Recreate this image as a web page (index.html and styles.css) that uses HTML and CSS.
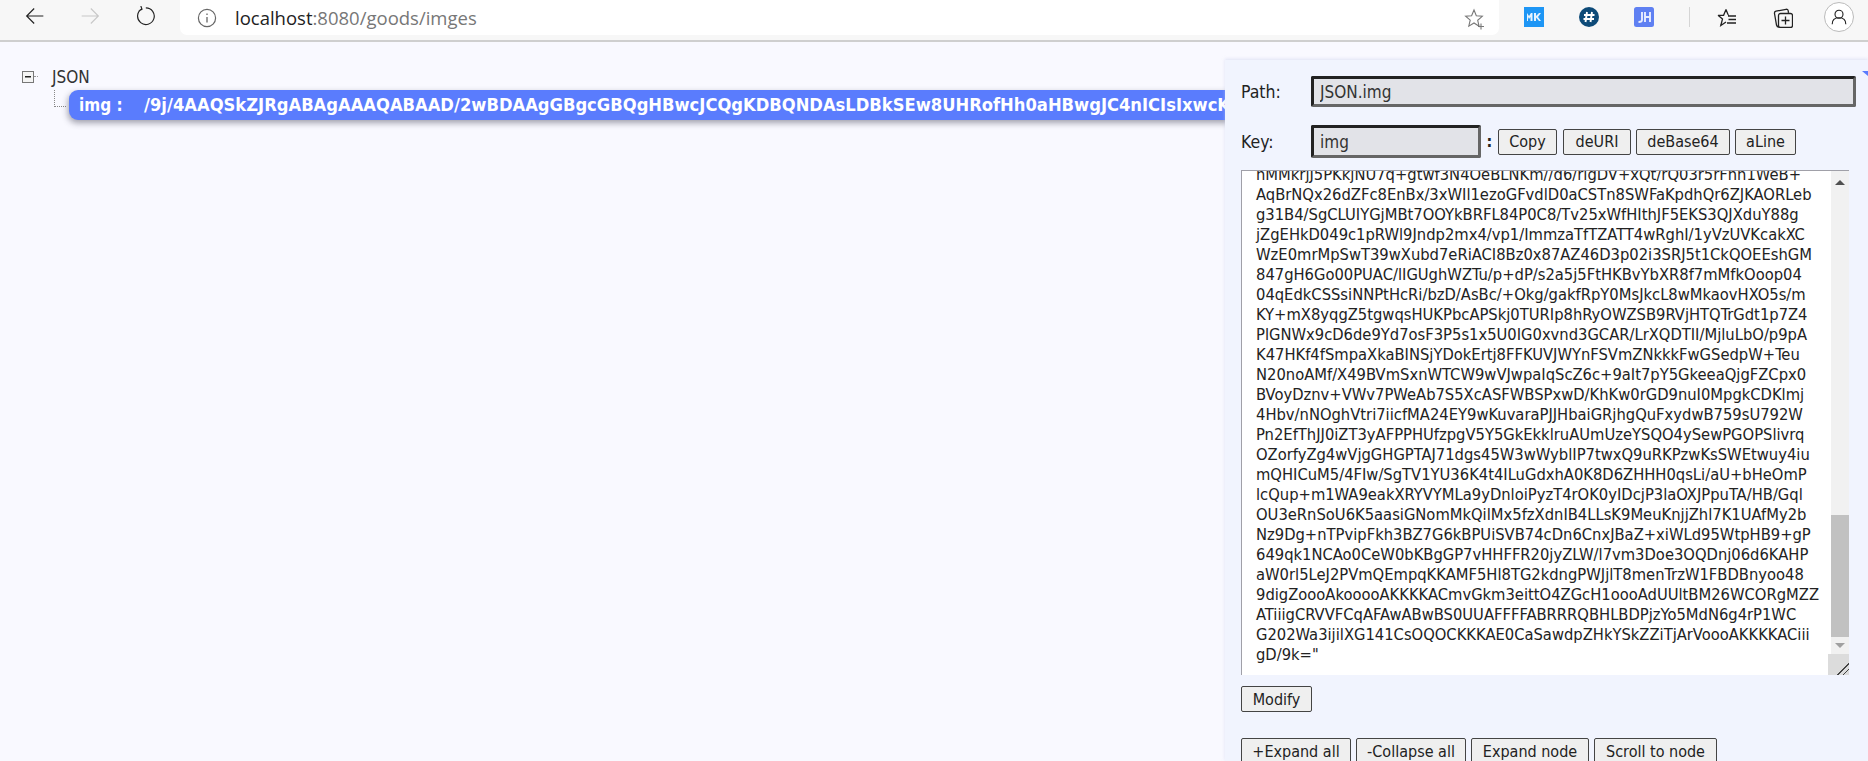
FILE: index.html
```html
<!DOCTYPE html>
<html lang="en">
<head>
<meta charset="utf-8">
<title>localhost:8080/goods/imges</title>
<link rel="stylesheet" href="styles.css">
</head>
<body>
<header class="toolbar">
  <nav class="nav">
    <svg class="nav-icon" viewBox="0 0 24 24"><path d="M22 12H2M11 3l-9 9 9 9" fill="none" stroke="#222" stroke-width="1.4"/></svg>
    <svg class="nav-icon" viewBox="0 0 24 24"><path d="M2 12h20M13 3l9 9-9 9" fill="none" stroke="#c8c8c8" stroke-width="1.4"/></svg>
    <svg class="nav-icon" viewBox="0 0 24 24"><path d="M8 3.6A10 10 0 1 0 13 2.2M7 0l1.4 3.8L4.6 6" fill="none" stroke="#222" stroke-width="1.4"/></svg>
  </nav>
  <div class="url">
    <svg class="info" viewBox="0 0 20 20"><circle cx="10" cy="10" r="8.6" fill="none" stroke="#666" stroke-width="1.2"/><path d="M10 9v5.5M10 5.5v1.6" stroke="#666" stroke-width="1.3"/></svg>
    <span class="host">localhost</span><span class="path">:8080/goods/imges</span>
    <svg class="addfav" viewBox="0 0 22 22"><path d="M10 2l2.3 5.8 6 .5-4.6 4 1.4 6L10 15l-5.2 3.2 1.4-6-4.6-4 6-.5z" fill="none" stroke="#777" stroke-width="1.1"/><path d="M17 15.500v6M14 18.500h6" stroke="#777" stroke-width="1.1"/></svg>
  </div>
  <div class="exts">
    <svg class="ext" viewBox="0 0 20 20"><rect width="20" height="20" fill="#1e96f5"/><path d="M3 14V6l2 3 2-3 1.500 0v8H6.500V10L5 12 4 10v4zM10 6h2v3l3-3h2l-3 4 3 4h-2l-3-3.500V14h-2z" fill="#e6f3fe"/></svg>
    <svg class="ext" viewBox="0 0 20 20"><circle cx="10" cy="10" r="10" fill="#0d4a78"/><path d="M8 5l-1.500 10M13 5l-1.500 10M5 8h10.500M4.500 12H15" stroke="#fff" stroke-width="1.900" fill="none"/></svg>
    <svg class="ext" viewBox="0 0 20 20"><rect width="20" height="20" rx="2.500" fill="#5f80f2"/><path d="M8 5v8c0 1.500-1 2-3.500 2M11 5v10M16 5v10M11 10h5" stroke="#e8edfe" stroke-width="1.900" fill="none"/></svg>
    <span class="sep"></span>
    <svg class="tool fav" viewBox="0 0 20 20"><path d="M9 1.500l2 5h-.2M1 7.300h5.600L9 1.500M1 7.300l4.500 3.700L3.800 17.500 9 14M11 8h8M11.500 11.500H19M10 15h9" fill="none" stroke="#222" stroke-width="1.300"/></svg>
    <svg class="tool coll" viewBox="0 0 20 20"><path d="M6 19c-1.500 0-2.200-.7-2.500-2L1.500 5.500C1.300 4.200 2 3.400 3 3.200L13 1.300c1.200-.2 2 .4 2.200 1.600l.3 2" fill="none" stroke="#222" stroke-width="1.300"/><rect x="5.500" y="5.500" width="14" height="14" rx="2" fill="#f7f7f7" stroke="#222" stroke-width="1.300"/><path d="M12.500 8.500v8M8.500 12.500h8" stroke="#222" stroke-width="1.300"/></svg>
    <span class="avatar"><svg class="avatar-icon" viewBox="0 0 20 20"><circle cx="10" cy="6.500" r="5" fill="none" stroke="#222" stroke-width="1.400"/><path d="M1.500 19c0-5 3.500-8 8.500-8s8.500 3 8.500 8" fill="none" stroke="#222" stroke-width="1.400"/></svg></span>
  </div>
</header>
<main class="page">
  <section class="tree">
    <div class="root">
      <span class="toggle"></span><span class="dots"></span><span class="root-label">JSON</span>
    </div>
    <div class="child">
      <span class="elbow"></span>
      <div class="pill"><span class="pill-key">img :</span><span class="pill-value">/9j/4AAQSkZJRgABAgAAAQABAAD/2wBDAAgGBgcGBQgHBwcJCQgKDBQNDAsLDBkSEw8UHRofHh0aHBwgJC4nICIsIxwcKC4oKDAsMDA0NDQ4</span></div>
    </div>
  </section>
  <aside class="panel">
    <span class="corner"></span>
    <div class="field path-row">
      <label class="lbl">Path:</label>
      <input class="inp inp-path" value="JSON.img" readonly>
    </div>
    <div class="field key-row">
      <label class="lbl">Key:</label>
      <input class="inp inp-key" value="img" readonly>
      <b class="colon">:</b>
      <button class="btn b-copy">Copy</button>
      <button class="btn b-uri">deURI</button>
      <button class="btn b-b64">deBase64</button>
      <button class="btn b-line">aLine</button>
    </div>
    <div class="area">
      <div class="area-text">
        <div>hMMkrjJ5PKkjNU7q+gtwf3N4OeBLNKm//d6/rigDV+xQt/rQ03r5rFhh1WeB+</div>
        <div>AqBrNQx26dZFc8EnBx/3xWIl1ezoGFvdlD0aCSTn8SWFaKpdhQr6ZJKAORLeb</div>
        <div>g31B4/SgCLUIYGjMBt7OOYkBRFL84P0C8/Tv25xWfHIthJF5EKS3QJXduY88g</div>
        <div>jZgEHkD049c1pRWl9Jndp2mx4/vp1/ImmzaTfTZATT4wRghI/1yVzUVKcakXC</div>
        <div>WzE0mrMpSwT39wXubd7eRiACI8Bz0x87AZ46D3p02i3SRJ5t1CkQOEEshGM</div>
        <div>847gH6Go00PUAC/lIGUghWZTu/p+dP/s2a5j5FtHKBvYbXR8f7mMfkOoop04</div>
        <div>04qEdkCSSsiNNPtHcRi/bzD/AsBc/+Okg/gakfRpY0MsJkcL8wMkaovHXO5s/m</div>
        <div>KY+mX8yqgZ5tgwqsHUKPbcAPSkj0TURIp8hRyOWZSB9RVjHTQTrGdt1p7Z4</div>
        <div>PlGNWx9cD6de9Yd7osF3P5s1x5U0IG0xvnd3GCAR/LrXQDTII/MjluLbO/p9pA</div>
        <div>K47HKf4fSmpaXkaBINSjYDokErtj8FFKUVJWYnFSVmZNkkkFwGSedpW+Teu</div>
        <div>N20noAMf/X49BVmSxnWTCW9wVJwpaIqScZ6c+9aIt7pY5GkeeaQjgFZCpx0</div>
        <div>BVoyDznv+VWv7PWeAb7S5XcASFWBSPxwD/KhKw0rGD9nuI0MpgkCDKlmj</div>
        <div>4Hbv/nNOghVtri7iicfMA24EY9wKuvaraPJJHbaiGRjhgQuFxydwB759sU792W</div>
        <div>Pn2EfThJJ0iZT3yAFPPHUfzpgV5Y5GkEkklruAUmUzeYSQO4ySewPGOPSlivrq</div>
        <div>OZorfyZg4wVjgGHGPTAJ71dgs45W3wWyblIP7twxQ9uRKPzwKsSWEtwuy4iu</div>
        <div>mQHICuM5/4FIw/SgTV1YU36K4t4ILuGdxhA0K8D6ZHHH0qsLi/aU+bHeOmP</div>
        <div>lcQup+m1WA9eakXRYVYMLa9yDnloiPyzT4rOK0yIDcjP3laOXJPpuTA/HB/Gql</div>
        <div>OU3eRnSoU6K5aasiGNomMkQilMx5fzXdnIB4LLsK9MeuKnjjZhl7K1UAfMy2b</div>
        <div>Nz9Dg+nTPvipFkh3BZ7G6kBPUiSVB74cDn6CnxJBaZ+xiWLd95WtpHB9+gP</div>
        <div>649qk1NCAo0CeW0bKBgGP7vHHFFR20jyZLW/l7vm3Doe3OQDnj06d6KAHP</div>
        <div>aW0rl5LeJ2PVmQEmpqKKAMF5Hl8TG2kdngPWJjlT8menTrzW1FBDBnyoo48</div>
        <div>9digZoooAkooooAKKKKACmvGkm3eittO4ZGcH1oooAdUUltBM26WCORgMZZ</div>
        <div>ATiiigCRVVFCqAFAwABwBS0UUAFFFFABRRRQBHLBDPjzYo5MdN6g4rP1WC</div>
        <div>G202Wa3ijilXG141CsOQOCKKKAE0CaSawdpZHkYSkZZiTjArVoooAKKKKACiii</div>
        <div>gD/9k="</div>
      </div>
      <div class="scrollbar">
        <span class="arrow up"></span>
        <span class="track"><span class="thumb"></span></span>
        <span class="arrow down"></span>
        <span class="resizer"></span>
      </div>
    </div>
    <button class="btn b-modify">Modify</button>
    <div class="actions">
      <button class="btn b-expand">+Expand all</button>
      <button class="btn b-collapse">-Collapse all</button>
      <button class="btn b-node">Expand node</button>
      <button class="btn b-scroll">Scroll to node</button>
    </div>
  </aside>
</main>
</body>
</html>
```

FILE: styles.css
```css
* { box-sizing: border-box; }
html, body { margin: 0; height: 100%; }
body {
  width: 1868px;
  height: 761px;
  overflow: hidden;
  background: #f9f9ff;
  font-family: "DejaVu Sans Condensed", "DejaVu Sans", sans-serif;
  font-stretch: condensed;
  color: #222;
  display: flex;
  flex-direction: column;
}

/* browser chrome */
.toolbar {
  height: 42px;
  flex: none;
  background: #f7f7f7;
  border-bottom: 2px solid #cfcfcf;
  display: flex;
  align-items: flex-start;
}
.nav {
  width: 180px;
  flex: none;
  display: flex;
  gap: 35px;
  padding: 6px 0 0 25px;
}
.nav-icon { width: 20px; height: 20px; }
.url {
  width: 1319px;
  height: 35px;
  flex: none;
  background: #fff;
  border-radius: 0 0 7px 7px;
  display: flex;
  align-items: center;
  padding: 0 13px 0 17px;
  font-family: "Open Sans", sans-serif;
  font-stretch: normal;
  font-size: 18.5px;
}
.info { width: 20px; height: 20px; margin-right: 18px; }
.host { color: #222; }
.path { color: #777; }
.addfav { width: 22px; height: 22px; margin-left: auto; margin-top: 2px; }
.exts {
  flex: 1;
  display: flex;
  align-items: flex-start;
  padding: 7px 0 0 25px;
}
.ext { width: 20px; height: 20px; margin-right: 35px; flex: none; }
.sep { width: 1px; height: 20px; background: #d5d5d5; margin-right: 27px; flex: none; }
.tool { width: 20px; height: 20px; flex: none; }
.fav { margin-top: 1px; margin-right: 36px; }
.coll { margin-top: 1px; margin-right: 31px; }
.avatar {
  width: 30px;
  height: 30px;
  margin-top: -5px;
  border: 1px solid #bbb;
  border-radius: 50%;
  background: #fff;
  display: flex;
  align-items: center;
  justify-content: center;
}
.avatar-icon { width: 16px; height: 16px; }

/* tree */
.page { flex: 1; position: relative; min-height: 0; }
.tree { padding: 26px 0 0 22px; }
.root { display: flex; align-items: center; height: 17px; }
.toggle {
  width: 12px;
  height: 12px;
  border: 1px solid #777;
  background: linear-gradient(#222, #222) center / 6px 1.500px no-repeat #f4f4f4;
}
.dots { width: 4px; border-top: 1px dotted #999; }
.root-label { margin-left: 14px; font-size: 17px; color: #333; }
.child { display: flex; margin: 5px 0 0 32px; }
.elbow {
  width: 12px;
  height: 17px;
  border-left: 1px dotted #888;
  border-bottom: 1px dotted #888;
  flex: none;
}
.pill {
  height: 30px;
  width: 1300px;
  flex: none;
  margin-left: 3px;
  padding-left: 10px;
  background: #5a7cfd;
  border-radius: 9px 0 0 9px;
  box-shadow: -1px 3px 6px rgba(50, 50, 70, .45);
  color: #fff;
  font-size: 17px;
  font-weight: 700;
  line-height: 30px;
  white-space: nowrap;
  overflow: hidden;
  display: flex;
}
.pill-key { width: 65px; flex: none; }
.pill-value { font-size: 18.2px; }

/* side panel */
.panel {
  position: absolute;
  left: 1225px;
  top: 18px;
  width: 643px;
  bottom: 0;
  background: #f1f4fe;
  box-shadow: 0 -1px 3px rgba(200, 205, 235, .5);
  padding: 16px 0 0 16px;
  font-size: 16px;
  overflow: hidden;
}
.corner {
  position: absolute;
  right: 0;
  top: 11px;
  width: 0;
  height: 0;
  border-style: solid;
  border-width: 5px 0 0 6px;
  border-color: #5a7cfd transparent transparent transparent;
}
.field { display: flex; align-items: center; }
.path-row { height: 31px; }
.key-row { height: 33px; margin-top: 18px; }
.lbl { width: 70px; flex: none; font-size: 17.5px; color: #222; }
.inp {
  font: inherit;
  font-size: 17px;
  font-stretch: condensed;
  color: #333;
  background: #e2e3e8;
  border-style: solid;
  border-width: 3px;
  border-color: #222 #666 #666 #222;
  border-radius: 2px;
  padding: 0 6px;
  height: 100%;
  outline: none;
}
.inp-path { width: 545px; }
.inp-key { width: 170px; }
.colon { width: 17px; text-align: center; flex: none; font-size: 16px; }
.btn {
  font: inherit;
  font-stretch: condensed;
  font-size: 16px;
  color: #222;
  height: 26px;
  padding: 0;
  background: #efefef;
  border: 1px solid #444;
  border-radius: 2px;
  flex: none;
}
.b-copy { width: 59px; }
.b-uri { width: 68px; margin-left: 6px; }
.b-b64 { width: 94px; margin-left: 5px; }
.b-line { width: 61px; margin-left: 5px; }
.area {
  width: 608px;
  height: 505px;
  margin-top: 12px;
  background: #fff;
  border-left: 1px solid #a0a0a8;
  border-top: 1px solid #a0a0a8;
  display: flex;
  overflow: hidden;
}
.area-text {
  width: 589px;
  flex: none;
  padding: 0 0 0 14px;
  margin-top: -6px;
  line-height: 20px;
  font-size: 16.4px;
  color: #222;
  white-space: nowrap;
}
.scrollbar {
  width: 18px;
  flex: none;
  background: #f1f1f1;
  display: flex;
  flex-direction: column;
  align-items: center;
}
.arrow { width: 0; height: 0; flex: none; border-style: solid; border-color: transparent; }
.up { margin-top: 9px; border-width: 0 5px 5px; border-bottom-color: #505050; }
.down { margin: 4px 0 6px; border-width: 5px 5px 0; border-top-color: #a0a0a0; }
.track { flex: 1; width: 100%; display: flex; align-items: flex-end; }
.thumb { width: 100%; height: 122px; margin-bottom: 2px; background: #c1c1c1; }
.resizer {
  flex: none;
  width: 21px;
  height: 21px;
  margin-left: -3px;
  background: linear-gradient(135deg, #dcdcdc 70%, #444 70%, #444 74%, #dcdcdc 74%, #dcdcdc 84%, #444 84%, #444 88%, #dcdcdc 88%);
}
.b-modify { display: block; width: 71px; margin-top: 11px; }
.actions { display: flex; gap: 5px; margin-top: 26px; }
.b-expand { width: 110px; }
.b-collapse { width: 110px; }
.b-node { width: 118px; }
.b-scroll { width: 123px; }
```
